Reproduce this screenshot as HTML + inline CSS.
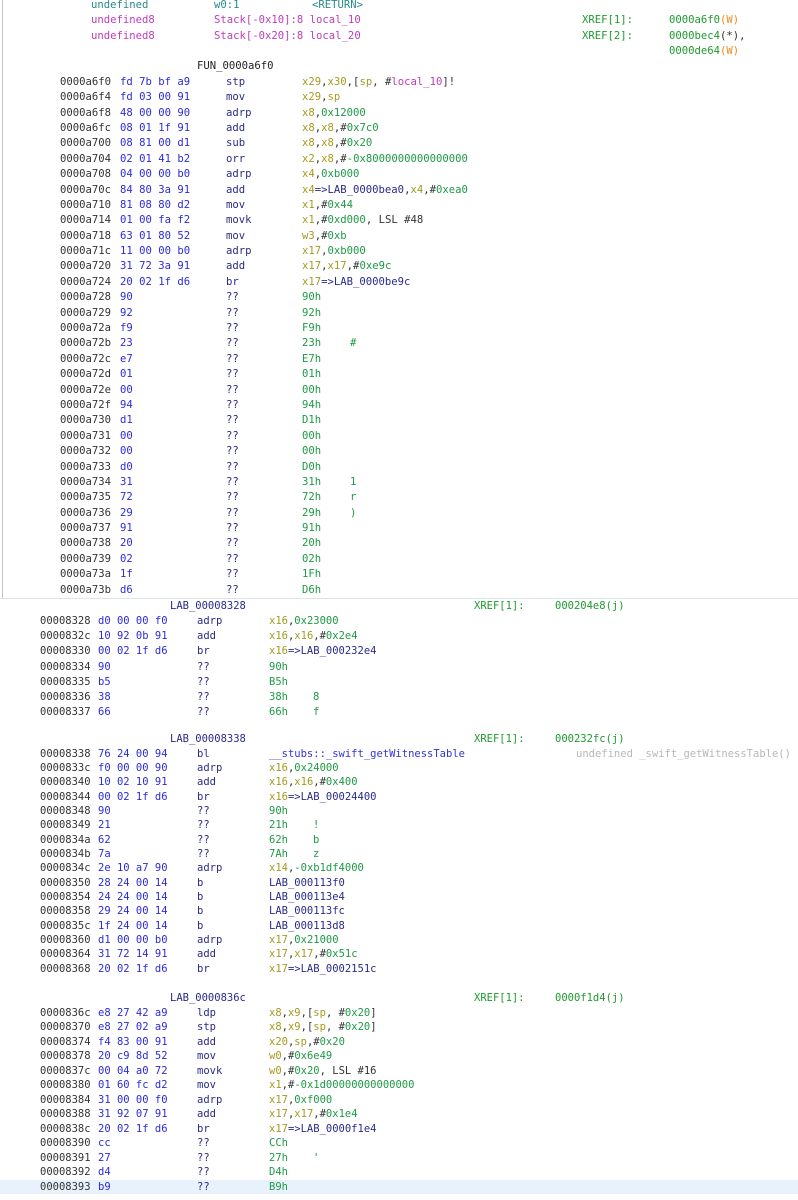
<!DOCTYPE html>
<html><head><meta charset="utf-8"><style>
html,body{margin:0;padding:0;background:#fff;width:798px;height:1200px;overflow:hidden;position:relative}
body{font-family:"DejaVu Sans Mono","Liberation Mono",monospace;font-size:10.6px;color:#333}
.blk{position:absolute;left:0;width:798px}
.bot{font-size:10.5px}
.r{position:relative;white-space:pre}
.r span.c{position:absolute;top:0}
.a{color:#333}.b{color:#2b2bdc}.m{color:#2a2a8a}.g{color:#1e9a46}.y{color:#a59a1e}.l{color:#2a2a8c}.p{color:#c03cb8}.t{color:#2a8a8a}.o{color:#f08a20}.x{color:#1e9a2e}
#top .r{height:15.4px;line-height:15.4px}
#A .r{height:15.2px;line-height:15.2px}
#B .r{height:14.35px;line-height:14.35px}
#C .r{height:14.5px;line-height:14.5px}
#top .ca{left:60px}#top .cb{left:120px}#top .cm{left:226px}#top .co{left:302px}#top .cs{left:350px}
.bot .ca{left:40px}.bot .cb{left:98px}.bot .cm{left:197px}.bot .co{left:269px}.bot .cs{left:313px}.bot .cl{left:170px}.bot .cx{left:474px}.bot .cv{left:555px}
.hl{background:#e8f2fc}
</style></head><body>
<div style="position:absolute;left:2px;top:0;width:1px;height:598px;background:#c4c4c4"></div>
<div style="position:absolute;left:0;top:598px;width:798px;height:1px;background:#dde4ec"></div>

<div class="blk" id="top" style="top:-2.2px">
<div class="r"><span class="c t" style="left:91px">undefined</span><span class="c t" style="left:214px">w0:1</span><span class="c t" style="left:312px">&lt;RETURN&gt;</span></div>
<div class="r"><span class="c p" style="left:91px">undefined8</span><span class="c p" style="left:214px">Stack[-0x10]:8 local_10</span><span class="c x" style="left:582px">XREF[1]:</span><span class="c" style="left:669px"><span class="x">0000a6f0</span><span class="o">(W)</span></span></div>
<div class="r"><span class="c p" style="left:91px">undefined8</span><span class="c p" style="left:214px">Stack[-0x20]:8 local_20</span><span class="c x" style="left:582px">XREF[2]:</span><span class="c" style="left:669px"><span class="x">0000bec4</span><span style="color:#333">(*),</span></span></div>
<div class="r"><span class="c" style="left:669px"><span class="x">0000de64</span><span class="o">(W)</span></span></div>
<div class="r"><span class="c" style="left:197px;color:#222">FUN_0000a6f0</span></div>
<div class="r"><span class="c a ca">0000a6f0</span><span class="c b cb">fd 7b bf a9</span><span class="c m cm">stp</span><span class="c co"><span class="y">x29</span>,<span class="y">x30</span>,[<span class="y">sp</span>, #<span class="p">local_10</span>]!</span></div>
<div class="r"><span class="c a ca">0000a6f4</span><span class="c b cb">fd 03 00 91</span><span class="c m cm">mov</span><span class="c co"><span class="y">x29</span>,<span class="y">sp</span></span></div>
<div class="r"><span class="c a ca">0000a6f8</span><span class="c b cb">48 00 00 90</span><span class="c m cm">adrp</span><span class="c co"><span class="y">x8</span>,<span class="g">0x12000</span></span></div>
<div class="r"><span class="c a ca">0000a6fc</span><span class="c b cb">08 01 1f 91</span><span class="c m cm">add</span><span class="c co"><span class="y">x8</span>,<span class="y">x8</span>,#<span class="g">0x7c0</span></span></div>
<div class="r"><span class="c a ca">0000a700</span><span class="c b cb">08 81 00 d1</span><span class="c m cm">sub</span><span class="c co"><span class="y">x8</span>,<span class="y">x8</span>,#<span class="g">0x20</span></span></div>
<div class="r"><span class="c a ca">0000a704</span><span class="c b cb">02 01 41 b2</span><span class="c m cm">orr</span><span class="c co"><span class="y">x2</span>,<span class="y">x8</span>,#<span class="g">-0x8000000000000000</span></span></div>
<div class="r"><span class="c a ca">0000a708</span><span class="c b cb">04 00 00 b0</span><span class="c m cm">adrp</span><span class="c co"><span class="y">x4</span>,<span class="g">0xb000</span></span></div>
<div class="r"><span class="c a ca">0000a70c</span><span class="c b cb">84 80 3a 91</span><span class="c m cm">add</span><span class="c co"><span class="y">x4</span><span class="l">=&gt;LAB_0000bea0</span>,<span class="y">x4</span>,#<span class="g">0xea0</span></span></div>
<div class="r"><span class="c a ca">0000a710</span><span class="c b cb">81 08 80 d2</span><span class="c m cm">mov</span><span class="c co"><span class="y">x1</span>,#<span class="g">0x44</span></span></div>
<div class="r"><span class="c a ca">0000a714</span><span class="c b cb">01 00 fa f2</span><span class="c m cm">movk</span><span class="c co"><span class="y">x1</span>,#<span class="g">0xd000</span>, LSL #48</span></div>
<div class="r"><span class="c a ca">0000a718</span><span class="c b cb">63 01 80 52</span><span class="c m cm">mov</span><span class="c co"><span class="y">w3</span>,#<span class="g">0xb</span></span></div>
<div class="r"><span class="c a ca">0000a71c</span><span class="c b cb">11 00 00 b0</span><span class="c m cm">adrp</span><span class="c co"><span class="y">x17</span>,<span class="g">0xb000</span></span></div>
<div class="r"><span class="c a ca">0000a720</span><span class="c b cb">31 72 3a 91</span><span class="c m cm">add</span><span class="c co"><span class="y">x17</span>,<span class="y">x17</span>,#<span class="g">0xe9c</span></span></div>
<div class="r"><span class="c a ca">0000a724</span><span class="c b cb">20 02 1f d6</span><span class="c m cm">br</span><span class="c co"><span class="y">x17</span><span class="l">=&gt;LAB_0000be9c</span></span></div>
<div class="r"><span class="c a ca">0000a728</span><span class="c b cb">90</span><span class="c m cm">??</span><span class="c g co">90h</span></div>
<div class="r"><span class="c a ca">0000a729</span><span class="c b cb">92</span><span class="c m cm">??</span><span class="c g co">92h</span></div>
<div class="r"><span class="c a ca">0000a72a</span><span class="c b cb">f9</span><span class="c m cm">??</span><span class="c g co">F9h</span></div>
<div class="r"><span class="c a ca">0000a72b</span><span class="c b cb">23</span><span class="c m cm">??</span><span class="c g co">23h</span><span class="c g cs">#</span></div>
<div class="r"><span class="c a ca">0000a72c</span><span class="c b cb">e7</span><span class="c m cm">??</span><span class="c g co">E7h</span></div>
<div class="r"><span class="c a ca">0000a72d</span><span class="c b cb">01</span><span class="c m cm">??</span><span class="c g co">01h</span></div>
<div class="r"><span class="c a ca">0000a72e</span><span class="c b cb">00</span><span class="c m cm">??</span><span class="c g co">00h</span></div>
<div class="r"><span class="c a ca">0000a72f</span><span class="c b cb">94</span><span class="c m cm">??</span><span class="c g co">94h</span></div>
<div class="r"><span class="c a ca">0000a730</span><span class="c b cb">d1</span><span class="c m cm">??</span><span class="c g co">D1h</span></div>
<div class="r"><span class="c a ca">0000a731</span><span class="c b cb">00</span><span class="c m cm">??</span><span class="c g co">00h</span></div>
<div class="r"><span class="c a ca">0000a732</span><span class="c b cb">00</span><span class="c m cm">??</span><span class="c g co">00h</span></div>
<div class="r"><span class="c a ca">0000a733</span><span class="c b cb">d0</span><span class="c m cm">??</span><span class="c g co">D0h</span></div>
<div class="r"><span class="c a ca">0000a734</span><span class="c b cb">31</span><span class="c m cm">??</span><span class="c g co">31h</span><span class="c g cs">1</span></div>
<div class="r"><span class="c a ca">0000a735</span><span class="c b cb">72</span><span class="c m cm">??</span><span class="c g co">72h</span><span class="c g cs">r</span></div>
<div class="r"><span class="c a ca">0000a736</span><span class="c b cb">29</span><span class="c m cm">??</span><span class="c g co">29h</span><span class="c g cs">)</span></div>
<div class="r"><span class="c a ca">0000a737</span><span class="c b cb">91</span><span class="c m cm">??</span><span class="c g co">91h</span></div>
<div class="r"><span class="c a ca">0000a738</span><span class="c b cb">20</span><span class="c m cm">??</span><span class="c g co">20h</span></div>
<div class="r"><span class="c a ca">0000a739</span><span class="c b cb">02</span><span class="c m cm">??</span><span class="c g co">02h</span></div>
<div class="r"><span class="c a ca">0000a73a</span><span class="c b cb">1f</span><span class="c m cm">??</span><span class="c g co">1Fh</span></div>
<div class="r"><span class="c a ca">0000a73b</span><span class="c b cb">d6</span><span class="c m cm">??</span><span class="c g co">D6h</span></div>
</div>

<div class="blk bot" id="A" style="top:598.9px">
<div class="r"><span class="c l cl">LAB_00008328</span><span class="c x cx">XREF[1]:</span><span class="c x cv">000204e8(j)</span></div>
<div class="r"><span class="c a ca">00008328</span><span class="c b cb">d0 00 00 f0</span><span class="c m cm">adrp</span><span class="c co"><span class="y">x16</span>,<span class="g">0x23000</span></span></div>
<div class="r"><span class="c a ca">0000832c</span><span class="c b cb">10 92 0b 91</span><span class="c m cm">add</span><span class="c co"><span class="y">x16</span>,<span class="y">x16</span>,#<span class="g">0x2e4</span></span></div>
<div class="r"><span class="c a ca">00008330</span><span class="c b cb">00 02 1f d6</span><span class="c m cm">br</span><span class="c co"><span class="y">x16</span><span class="l">=&gt;LAB_000232e4</span></span></div>
<div class="r"><span class="c a ca">00008334</span><span class="c b cb">90</span><span class="c m cm">??</span><span class="c g co">90h</span></div>
<div class="r"><span class="c a ca">00008335</span><span class="c b cb">b5</span><span class="c m cm">??</span><span class="c g co">B5h</span></div>
<div class="r"><span class="c a ca">00008336</span><span class="c b cb">38</span><span class="c m cm">??</span><span class="c g co">38h</span><span class="c g cs">8</span></div>
<div class="r"><span class="c a ca">00008337</span><span class="c b cb">66</span><span class="c m cm">??</span><span class="c g co">66h</span><span class="c g cs">f</span></div>
</div>

<div class="blk bot" id="B" style="top:732.3px">
<div class="r"><span class="c l cl">LAB_00008338</span><span class="c x cx">XREF[1]:</span><span class="c x cv">000232fc(j)</span></div>
<div class="r"><span class="c a ca">00008338</span><span class="c b cb">76 24 00 94</span><span class="c m cm">bl</span><span class="c co" style="color:#3434d8">__stubs::_swift_getWitnessTable</span><span class="c" style="left:576px;color:#b8b8b8">undefined _swift_getWitnessTable()</span></div>
<div class="r"><span class="c a ca">0000833c</span><span class="c b cb">f0 00 00 90</span><span class="c m cm">adrp</span><span class="c co"><span class="y">x16</span>,<span class="g">0x24000</span></span></div>
<div class="r"><span class="c a ca">00008340</span><span class="c b cb">10 02 10 91</span><span class="c m cm">add</span><span class="c co"><span class="y">x16</span>,<span class="y">x16</span>,#<span class="g">0x400</span></span></div>
<div class="r"><span class="c a ca">00008344</span><span class="c b cb">00 02 1f d6</span><span class="c m cm">br</span><span class="c co"><span class="y">x16</span><span class="l">=&gt;LAB_00024400</span></span></div>
<div class="r"><span class="c a ca">00008348</span><span class="c b cb">90</span><span class="c m cm">??</span><span class="c g co">90h</span></div>
<div class="r"><span class="c a ca">00008349</span><span class="c b cb">21</span><span class="c m cm">??</span><span class="c g co">21h</span><span class="c g cs">!</span></div>
<div class="r"><span class="c a ca">0000834a</span><span class="c b cb">62</span><span class="c m cm">??</span><span class="c g co">62h</span><span class="c g cs">b</span></div>
<div class="r"><span class="c a ca">0000834b</span><span class="c b cb">7a</span><span class="c m cm">??</span><span class="c g co">7Ah</span><span class="c g cs">z</span></div>
<div class="r"><span class="c a ca">0000834c</span><span class="c b cb">2e 10 a7 90</span><span class="c m cm">adrp</span><span class="c co"><span class="y">x14</span>,<span class="g">-0xb1df4000</span></span></div>
<div class="r"><span class="c a ca">00008350</span><span class="c b cb">28 24 00 14</span><span class="c m cm">b</span><span class="c l co">LAB_000113f0</span></div>
<div class="r"><span class="c a ca">00008354</span><span class="c b cb">24 24 00 14</span><span class="c m cm">b</span><span class="c l co">LAB_000113e4</span></div>
<div class="r"><span class="c a ca">00008358</span><span class="c b cb">29 24 00 14</span><span class="c m cm">b</span><span class="c l co">LAB_000113fc</span></div>
<div class="r"><span class="c a ca">0000835c</span><span class="c b cb">1f 24 00 14</span><span class="c m cm">b</span><span class="c l co">LAB_000113d8</span></div>
<div class="r"><span class="c a ca">00008360</span><span class="c b cb">d1 00 00 b0</span><span class="c m cm">adrp</span><span class="c co"><span class="y">x17</span>,<span class="g">0x21000</span></span></div>
<div class="r"><span class="c a ca">00008364</span><span class="c b cb">31 72 14 91</span><span class="c m cm">add</span><span class="c co"><span class="y">x17</span>,<span class="y">x17</span>,#<span class="g">0x51c</span></span></div>
<div class="r"><span class="c a ca">00008368</span><span class="c b cb">20 02 1f d6</span><span class="c m cm">br</span><span class="c co"><span class="y">x17</span><span class="l">=&gt;LAB_0002151c</span></span></div>
</div>

<div class="blk bot" id="C" style="top:991.25px">
<div class="r"><span class="c l cl">LAB_0000836c</span><span class="c x cx">XREF[1]:</span><span class="c x cv">0000f1d4(j)</span></div>
<div class="r"><span class="c a ca">0000836c</span><span class="c b cb">e8 27 42 a9</span><span class="c m cm">ldp</span><span class="c co"><span class="y">x8</span>,<span class="y">x9</span>,[<span class="y">sp</span>, #<span class="g">0x20</span>]</span></div>
<div class="r"><span class="c a ca">00008370</span><span class="c b cb">e8 27 02 a9</span><span class="c m cm">stp</span><span class="c co"><span class="y">x8</span>,<span class="y">x9</span>,[<span class="y">sp</span>, #<span class="g">0x20</span>]</span></div>
<div class="r"><span class="c a ca">00008374</span><span class="c b cb">f4 83 00 91</span><span class="c m cm">add</span><span class="c co"><span class="y">x20</span>,<span class="y">sp</span>,#<span class="g">0x20</span></span></div>
<div class="r"><span class="c a ca">00008378</span><span class="c b cb">20 c9 8d 52</span><span class="c m cm">mov</span><span class="c co"><span class="y">w0</span>,#<span class="g">0x6e49</span></span></div>
<div class="r"><span class="c a ca">0000837c</span><span class="c b cb">00 04 a0 72</span><span class="c m cm">movk</span><span class="c co"><span class="y">w0</span>,#<span class="g">0x20</span>, LSL #16</span></div>
<div class="r"><span class="c a ca">00008380</span><span class="c b cb">01 60 fc d2</span><span class="c m cm">mov</span><span class="c co"><span class="y">x1</span>,#<span class="g">-0x1d00000000000000</span></span></div>
<div class="r"><span class="c a ca">00008384</span><span class="c b cb">31 00 00 f0</span><span class="c m cm">adrp</span><span class="c co"><span class="y">x17</span>,<span class="g">0xf000</span></span></div>
<div class="r"><span class="c a ca">00008388</span><span class="c b cb">31 92 07 91</span><span class="c m cm">add</span><span class="c co"><span class="y">x17</span>,<span class="y">x17</span>,#<span class="g">0x1e4</span></span></div>
<div class="r"><span class="c a ca">0000838c</span><span class="c b cb">20 02 1f d6</span><span class="c m cm">br</span><span class="c co"><span class="y">x17</span><span class="l">=&gt;LAB_0000f1e4</span></span></div>
<div class="r"><span class="c a ca">00008390</span><span class="c b cb">cc</span><span class="c m cm">??</span><span class="c g co">CCh</span></div>
<div class="r"><span class="c a ca">00008391</span><span class="c b cb">27</span><span class="c m cm">??</span><span class="c g co">27h</span><span class="c g cs">'</span></div>
<div class="r"><span class="c a ca">00008392</span><span class="c b cb">d4</span><span class="c m cm">??</span><span class="c g co">D4h</span></div>
<div class="r hl"><span class="c a ca">00008393</span><span class="c b cb">b9</span><span class="c m cm">??</span><span class="c g co">B9h</span></div>
</div>
</body></html>
